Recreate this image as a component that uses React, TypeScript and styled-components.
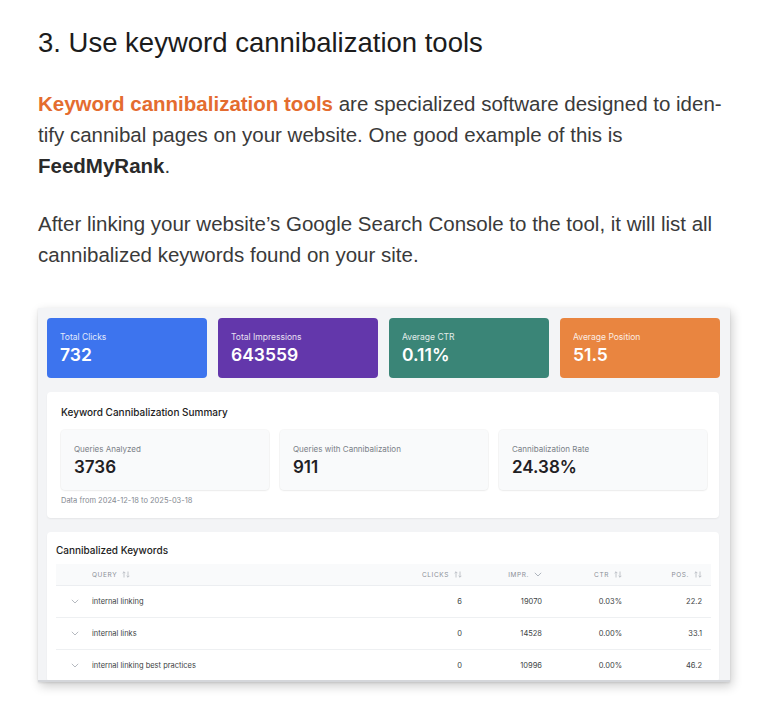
import styled, { createGlobalStyle } from "styled-components";

const GlobalStyle = createGlobalStyle`
  html, body {
    margin: 0;
    padding: 0;
    background: #ffffff;
  }
  * {
    box-sizing: border-box;
  }
`;

const stats = [
  { label: "Total Clicks", value: "732", color: "#3d74ee" },
  { label: "Total Impressions", value: "643559", color: "#6337ab" },
  { label: "Average CTR", value: "0.11%", color: "#3a8577" },
  { label: "Average Position", value: "51.5", color: "#e98540" },
];

const summary = [
  { label: "Queries Analyzed", value: "3736" },
  { label: "Queries with Cannibalization", value: "911" },
  { label: "Cannibalization Rate", value: "24.38%" },
];

const rows = [
  { query: "internal linking", clicks: "6", impr: "19070", ctr: "0.03%", pos: "22.2" },
  { query: "internal links", clicks: "0", impr: "14528", ctr: "0.00%", pos: "33.1" },
  { query: "internal linking best practices", clicks: "0", impr: "10996", ctr: "0.00%", pos: "46.2" },
];

function SortIcon() {
  return (
    <svg width="8" height="7" viewBox="0 0 8 7" fill="none" stroke="#b4b8bf" strokeWidth="0.8">
      <path d="M2 6.5V0.8M0.6 2.2L2 0.8L3.4 2.2" />
      <path d="M6 0.5V6.2M4.6 4.8L6 6.2L7.4 4.8" />
    </svg>
  );
}

function DownIcon({ color = "#9ca3af" }: { color?: string }) {
  return (
    <svg width="8" height="5" viewBox="0 0 8 5" fill="none" stroke={color} strokeWidth="0.8">
      <path d="M0.8 0.8L4 4L7.2 0.8" />
    </svg>
  );
}

function App() {
  return (
    <Page>
      <GlobalStyle />
      <Heading>3. Use keyword cannibalization tools</Heading>
      <Para>
        <Accent>Keyword cannibalization tools</Accent> are specialized software designed to iden-
        <br />
        tify cannibal pages on your website. One good example of this is
        <br />
        <Strong>FeedMyRank</Strong>.
      </Para>
      <Para>
        After linking your website’s Google Search Console to the tool, it will list all
        <br />
        cannibalized keywords found on your site.
      </Para>

      <Shot>
        <StatGrid>
          {stats.map((s) => (
            <StatCard key={s.label} $bg={s.color}>
              <StatLabel>{s.label}</StatLabel>
              <StatValue>{s.value}</StatValue>
            </StatCard>
          ))}
        </StatGrid>

        <Card $pad="14px 14px 12px">
          <CardTitle>Keyword Cannibalization Summary</CardTitle>
          <SummaryGrid>
            {summary.map((s) => (
              <SummaryItem key={s.label}>
                <SummaryLabel>{s.label}</SummaryLabel>
                <SummaryValue>{s.value}</SummaryValue>
              </SummaryItem>
            ))}
          </SummaryGrid>
          <DateNote>Data from 2024-12-18 to 2025-03-18</DateNote>
        </Card>

        <Card $pad="12px 8px 0 9px">
          <CardTitle>Cannibalized Keywords</CardTitle>
          <Table>
            <HeadRow>
              <span />
              <HeadCell>
                QUERY <SortIcon />
              </HeadCell>
              <HeadCell $right>
                CLICKS <SortIcon />
              </HeadCell>
              <HeadCell $right>
                IMPR. <DownIcon />
              </HeadCell>
              <HeadCell $right>
                CTR <SortIcon />
              </HeadCell>
              <HeadCell $right>
                POS. <SortIcon />
              </HeadCell>
            </HeadRow>
            {rows.map((r) => (
              <Row key={r.query}>
                <Toggle>
                  <DownIcon color="#a3a8b0" />
                </Toggle>
                <Cell>{r.query}</Cell>
                <Cell $right>{r.clicks}</Cell>
                <Cell $right>{r.impr}</Cell>
                <Cell $right>{r.ctr}</Cell>
                <Cell $right>{r.pos}</Cell>
              </Row>
            ))}
          </Table>
        </Card>
      </Shot>
    </Page>
  );
}

export default App;

const Page = styled.div`
  width: 768px;
  height: 702px;
  padding: 26px 0 0 38px;
  font-family: "Liberation Sans", Arial, sans-serif;
  overflow: hidden;
`;

const Heading = styled.h2`
  margin: 0 0 28px;
  font-size: 27.5px;
  line-height: 34px;
  font-weight: 400;
  color: #1c1c1c;
`;

const Para = styled.p`
  margin: 0 0 27px;
  font-size: 20.5px;
  line-height: 31px;
  color: #3a3a3a;
  white-space: nowrap;
`;

const Accent = styled.span`
  color: #e46c2f;
  font-weight: 700;
`;

const Strong = styled.strong`
  color: #2a2a2a;
  font-weight: 700;
`;

const Shot = styled.div`
  margin-top: 38px;
  width: 692px;
  height: 374px;
  padding: 10px 11px 0 9px;
  background: #f3f4f6;
  font-family: Inter, "Noto Sans", sans-serif;
  overflow: hidden;
  box-shadow: 2px 4px 10px rgba(0, 0, 0, 0.2), 0 1px 2px rgba(0, 0, 0, 0.1);
  border-bottom: 2px solid #d4d6da;
`;

const StatGrid = styled.div`
  display: grid;
  grid-template-columns: repeat(4, 160px);
  gap: 11px;
`;

const StatCard = styled.div<{ $bg: string }>`
  height: 60px;
  padding: 14px 13px 0;
  border-radius: 4px;
  background: ${(p) => p.$bg};
  color: #ffffff;
`;

const StatLabel = styled.div`
  font-size: 8.5px;
  line-height: 11px;
  opacity: 0.85;
`;

const StatValue = styled.div`
  margin-top: 1px;
  font-size: 17.5px;
  line-height: 22px;
  font-weight: 600;
`;

const Card = styled.div<{ $pad: string }>`
  margin-top: 14px;
  width: 672px;
  padding: ${(p) => p.$pad};
  background: #ffffff;
  border-radius: 4px;
  box-shadow: 0 1px 2px rgba(0, 0, 0, 0.06);

  & + & {
    margin-top: 14px;
  }
`;

const CardTitle = styled.div`
  font-size: 10px;
  line-height: 12px;
  font-weight: 500;
  color: #222;
`;

const SummaryGrid = styled.div`
  margin-top: 12px;
  display: grid;
  grid-template-columns: repeat(3, 208px);
  gap: 11px;
`;

const SummaryItem = styled.div`
  height: 60px;
  padding: 14px 13px 0;
  background: #f9fafb;
  border-radius: 4px;
  box-shadow: 0 0 0 1px rgba(0, 0, 0, 0.03), 0 1px 2px rgba(0, 0, 0, 0.05);
`;

const SummaryLabel = styled.div`
  font-size: 8px;
  line-height: 11px;
  color: #7a7f87;
`;

const SummaryValue = styled.div`
  margin-top: 1px;
  font-size: 17px;
  line-height: 22px;
  font-weight: 600;
  color: #1f2023;
`;

const DateNote = styled.div`
  margin-top: 6px;
  font-size: 7.5px;
  line-height: 10px;
  color: #858a92;
`;

const Table = styled.div`
  margin-top: 8px;
  width: 655px;
`;

const cols = "36px 299px 80px 80px 80px 80px";

const HeadRow = styled.div`
  display: grid;
  grid-template-columns: ${cols};
  height: 22px;
  align-items: center;
  background: #f9fafb;
  border-bottom: 1px solid #eceef1;
`;

const HeadCell = styled.div<{ $right?: boolean }>`
  display: flex;
  align-items: center;
  justify-content: ${(p) => (p.$right ? "flex-end" : "flex-start")};
  gap: 5px;
  padding-right: ${(p) => (p.$right ? "9px" : "0")};
  font-size: 6.5px;
  letter-spacing: 0.6px;
  color: #8a8f97;
`;

const Row = styled.div`
  display: grid;
  grid-template-columns: ${cols};
  height: 32px;
  align-items: center;
  border-bottom: 1px solid #eef0f2;
`;

const Toggle = styled.div`
  display: flex;
  justify-content: center;
  padding-left: 2px;
`;

const Cell = styled.div<{ $right?: boolean }>`
  text-align: ${(p) => (p.$right ? "right" : "left")};
  padding-right: ${(p) => (p.$right ? "9px" : "0")};
  font-size: 7.5px;
  color: #3c3f44;
`;
